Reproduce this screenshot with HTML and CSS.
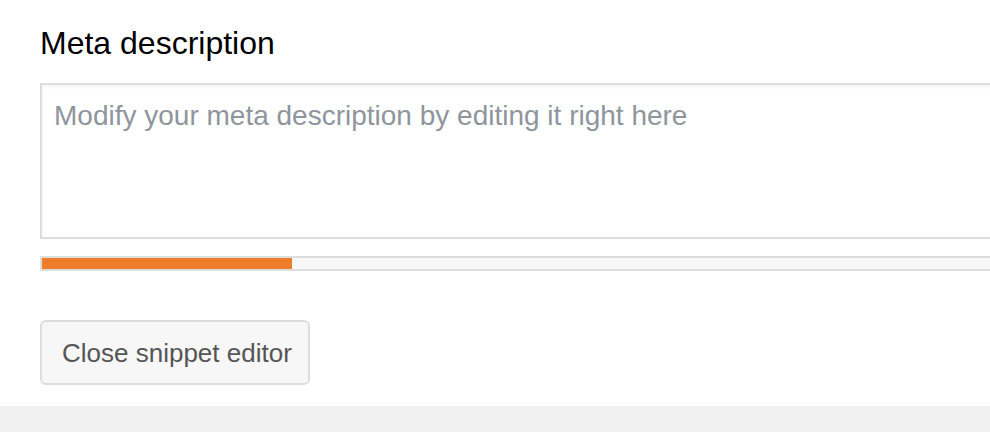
FILE: index.html
```html
<!DOCTYPE html>
<html lang="en">
<head>
  <meta charset="UTF-8">
  <title>Snippet editor</title>
  <link rel="stylesheet" href="styles.css">
</head>
<body>

<div class="snippet-editor">
  <h2 class="field-title">Meta description</h2>
  <textarea class="meta-input" placeholder="Modify your meta description by editing it right here"></textarea>
  <div class="length-bar"><div class="length-fill" style="width: 250px"></div></div>
  <button class="close-btn" type="button">Close snippet editor</button>
</div>

</body>
</html>
```

FILE: styles.css
```css
html, body {
  margin: 0;
  height: 100%;
  overflow: hidden;
}
body {
  font-family: "Liberation Sans", Arial, sans-serif;
  background: #f1f1f1;
  color: #111;
}
.snippet-editor {
  background: #fff;
  padding: 25px 0 21px 40px;
  overflow: hidden;
}
.field-title {
  font-size: 32px;
  font-weight: normal;
  line-height: 36px;
  margin: 0 0 22px;
  color: #000;
}
.meta-input {
  display: block;
  box-sizing: border-box;
  width: 1000px;
  height: 156px;
  margin: 0;
  padding: 15px 12px 12px;
  font-family: inherit;
  font-size: 28px;
  line-height: 32px;
  color: #32373c;
  border: 2px solid #ddd;
  box-shadow: inset 0 2px 4px rgba(0, 0, 0, 0.04);
  resize: none;
  outline: none;
}
.meta-input::placeholder {
  color: #8f959d;
  opacity: 1;
}
.length-bar {
  box-sizing: border-box;
  width: 1000px;
  height: 15px;
  margin-top: 17px;
  background: #f7f7f7;
  border: 2px solid #ddd;
}
.length-fill {
  height: 100%;
  background: #ee7c2b;
}
.close-btn {
  display: block;
  box-sizing: border-box;
  height: 65px;
  margin-top: 49px;
  padding: 0 16px 0 20px;
  font-family: inherit;
  font-size: 26px;
  line-height: 63px;
  color: #555;
  background: #f7f7f7;
  border: 2px solid #ddd;
  border-radius: 6px;
  cursor: pointer;
}
.close-btn:hover {
  background: #fafafa;
  border-color: #999;
}
```
